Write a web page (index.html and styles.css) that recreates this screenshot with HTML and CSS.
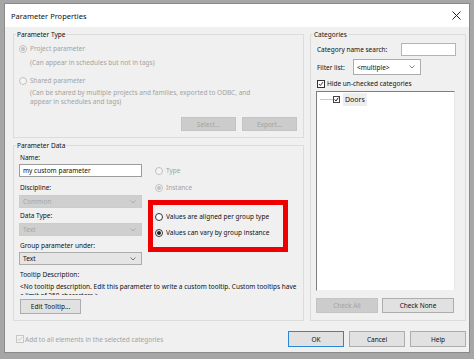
FILE: index.html
```html
<!DOCTYPE html>
<html>
<head>
<meta charset="utf-8">
<link rel="stylesheet" href="styles.css">
</head>
<body>
<div class="window">
  <div class="titlebar">
    <span class="title">Parameter Properties</span>
    <svg class="close" width="9" height="9" viewBox="0 0 9 9"><path d="M0.5 0.5 L8.5 8.5 M8.5 0.5 L0.5 8.5" stroke="#222" stroke-width="1" fill="none"/></svg>
  </div>
  <div class="content">
    <div class="main">
      <div class="leftcol">
        <fieldset class="group g-type">
          <legend>Parameter Type</legend>
          <div class="radio-row dis"><span class="radio dis checked"></span>Project parameter</div>
          <div class="hint">(Can appear in schedules but not in tags)</div>
          <div class="radio-row dis shared"><span class="radio dis"></span>Shared parameter</div>
          <div class="hint hint2">(Can be shared by multiple projects and families, exported to ODBC, and<br>appear in schedules and tags)</div>
          <div class="btnrow">
            <div class="btn btn-dis w55">Select...</div>
            <div class="btn btn-dis w55">Export...</div>
          </div>
        </fieldset>
        <fieldset class="group g-data">
          <legend>Parameter Data</legend>
          <div class="data-grid">
            <div class="fields">
              <div class="lbl">Name:</div>
              <div class="input name-input">my custom parameter</div>
              <div class="lbl l-disc">Discipline:</div>
              <div class="select sel-dis s-disc"><span>Common</span><svg width="6" height="4" viewBox="0 0 6 4"><polyline points="0.5,0.5 3,3 5.5,0.5" fill="none" stroke="#a8a8a8" stroke-width="0.9"/></svg></div>
              <div class="lbl l-dt">Data Type:</div>
              <div class="select sel-dis s-dt"><span>Text</span><svg width="6" height="4" viewBox="0 0 6 4"><polyline points="0.5,0.5 3,3 5.5,0.5" fill="none" stroke="#a8a8a8" stroke-width="0.9"/></svg></div>
              <div class="lbl l-grp">Group parameter under:</div>
              <div class="select sel-en s-grp"><span>Text</span><svg width="6" height="4" viewBox="0 0 6 4"><polyline points="0.5,0.5 3,3 5.5,0.5" fill="none" stroke="#666" stroke-width="0.9"/></svg></div>
            </div>
            <div class="scope">
              <div class="radio-row dis r-type"><span class="radio dis"></span>Type</div>
              <div class="radio-row dis r-inst"><span class="radio dis checked"></span>Instance</div>
              <div class="redbox">
                <div class="radio-row"><span class="radio"></span>Values are aligned per group type</div>
                <div class="radio-row r-vary"><span class="radio checked"></span>Values can vary by group instance</div>
              </div>
            </div>
          </div>
          <div class="lbl l-tip">Tooltip Description:</div>
          <div class="tiptext">&lt;No tooltip description. Edit this parameter to write a custom tooltip. Custom tooltips have a limit of 250 characters.&gt;</div>
          <div class="btn btn-en edit-tip">Edit Tooltip...</div>
        </fieldset>
      </div>
      <fieldset class="group g-cat">
        <legend>Categories</legend>
        <div class="cat-row r1">
          <span class="cat-lbl w-search">Category name search:</span>
          <div class="input search-input"></div>
        </div>
        <div class="cat-row r2">
          <span class="cat-lbl w-filter">Filter list:</span>
          <div class="select sel-white s-filter"><span>&lt;multiple&gt;</span><svg width="6" height="4" viewBox="0 0 6 4"><polyline points="0.5,0.5 3,3 5.5,0.5" fill="none" stroke="#777" stroke-width="0.9"/></svg></div>
        </div>
        <div class="cat-row r3">
          <span class="check"><svg width="8" height="8" viewBox="0 0 8 8"><polyline points="1.3,4 3.1,6 6.7,1.4" fill="none" stroke="#111" stroke-width="1.1"/></svg></span>
          <span>Hide un-checked categories</span>
        </div>
        <div class="tree">
          <div class="tree-row">
            <span class="tree-line"></span>
            <span class="check small"><svg width="7" height="7" viewBox="0 0 7 7"><polyline points="1,3.5 2.8,5.5 6,1" fill="none" stroke="#000" stroke-width="1.3"/></svg></span>
            <span class="tree-item">Doors</span>
          </div>
        </div>
        <div class="cat-btns">
          <div class="btn btn-dis w62">Check All</div>
          <div class="btn btn-en w72">Check None</div>
        </div>
      </fieldset>
    </div>
    <div class="footer">
      <div class="addall">
        <span class="check dis"><svg width="8" height="8" viewBox="0 0 8 8"><polyline points="1.3,4 3.1,6 6.7,1.4" fill="none" stroke="#c4c4c4" stroke-width="1.1"/></svg></span>
        <span>Add to all elements in the selected categories</span>
      </div>
      <div class="dlg-btns">
        <div class="btn btn-en btn-ok w56">OK</div>
        <div class="btn btn-en w56">Cancel</div>
        <div class="btn btn-en w56">Help</div>
      </div>
    </div>
  </div>
</div>
</body>
</html>
```

FILE: styles.css
```css
* { box-sizing: border-box; }
html, body { margin: 0; padding: 0; }
body {
  width: 474px;
  height: 359px;
  overflow: hidden;
  background: #a6a6a6;
  font-family: "Noto Sans", "DejaVu Sans", sans-serif;
  font-size: 6.5px;
  color: #1a1a1a;
}
.window {
  margin: 3px 0 0 4px;
  width: 466px;
  height: 350px;
  border: 1px solid #8a8a8a;
  background: #f0f0f0;
  display: flex;
  flex-direction: column;
}
.titlebar {
  flex: none;
  height: 23px;
  background: #fff;
  display: flex;
  align-items: center;
  justify-content: space-between;
  padding: 0 8px 0 6px;
}
.title { font-size: 7.5px; color: #111; }
.content {
  flex: 1;
  padding: 3px 3px 0 8px;
  display: flex;
  flex-direction: column;
}
.main { display: flex; gap: 6px; }
.leftcol { width: 291px; display: flex; flex-direction: column; gap: 3px; }

fieldset.group {
  margin: 0;
  min-width: 0;
  border: 1px solid #dcdcdc;
}
fieldset.group legend {
  padding: 0 1px;
  margin-left: -3px;
  line-height: 9px;
  color: #111;
}
.g-type { height: 108px; padding: 5px 6px 0 5px; }
.g-data { height: 180px; padding: 3px 6px 0 5px; }
.g-cat { width: 156px; height: 291px; padding: 4px 8px 0 5px; }
.g-cat legend { margin-left: -2px; }

.radio-row { display: flex; align-items: center; height: 10px; line-height: 10px; white-space: nowrap; }
.radio-row.dis { color: #a3a3a3; }
.radio {
  flex: none;
  width: 8px; height: 8px;
  border-radius: 50%;
  border: 1px solid #333;
  background: #fff;
  margin-right: 3px;
  display: flex; align-items: center; justify-content: center;
}
.radio.checked::after {
  content: "";
  width: 4px; height: 4px;
  border-radius: 50%;
  background: #222;
}
.radio.dis { border-color: #c2c2c2; background: #f4f4f4; }
.radio.dis.checked::after { background: #c2c2c2; }

.hint { padding-left: 11px; margin-top: 4px; line-height: 10px; color: #a3a3a3; white-space: nowrap; }
.shared { margin-top: 8px; }
.hint2 { margin-top: 2px; line-height: 9px; }
.btnrow { margin-top: 11px; display: flex; justify-content: flex-end; gap: 6px; }

.btn {
  height: 14px;
  display: flex; align-items: center; justify-content: center;
  border: 1px solid #adadad;
  white-space: nowrap;
}
.btn-dis { background: #cccccc; border-color: #c4c4c4; color: #a3a3a3; }
.btn-en { background: #e1e1e1; color: #111; }
.btn-ok { border-color: #2a86d8; }
.w55 { width: 55px; }
.w56 { width: 56px; height: 16px; }
.w62 { width: 62px; height: 15px; }
.w72 { width: 72px; height: 15px; }

.data-grid { display: grid; grid-template-columns: 123px 140px; column-gap: 6px; }
.fields { display: flex; flex-direction: column; }
.lbl { height: 10px; line-height: 10px; padding-left: 1px; color: #111; white-space: nowrap; }
.input {
  height: 13px;
  background: #fff;
  border: 1px solid #9c9c9c;
  line-height: 11px;
  padding-left: 3px;
  color: #111;
}
.name-input { margin-top: 1px; }
.l-disc { margin-top: 6px; }
.s-disc { margin-top: 2px; }
.l-dt { margin-top: 3px; }
.s-dt { margin-top: 2px; }
.l-grp { margin-top: 5px; }
.s-grp { margin-top: 1px; }
.select {
  height: 13px;
  display: flex; align-items: center; justify-content: space-between;
  padding: 0 5px 0 3px;
  border: 1px solid #acacac;
}
.sel-dis { background: #cfcfcf; border-color: #cccccc; color: #a6a6a6; }
.sel-en { background: #e5e5e5; color: #111; }
.sel-white { background: #fff; color: #111; }

.scope { display: flex; flex-direction: column; }
.r-type { margin-top: 13px; padding-left: 7px; }
.r-inst { margin-top: 7px; padding-left: 7px; }
.redbox {
  margin-top: 7px;
  height: 52px;
  border: 5px solid #ee0000;
  padding: 7px 0 0 2px;
  color: #111;
}
.r-vary { margin-top: 6px; }

.l-tip { margin-top: 5px; }
.tiptext {
  margin-top: 2px;
  height: 13px;
  line-height: 9px;
  overflow: hidden;
  padding-left: 1px;
  padding-right: 0;
  color: #111;
}
.edit-tip { margin-top: 4px; margin-left: 1px; width: 61px; height: 15px; }

.cat-row { display: flex; align-items: center; white-space: nowrap; color: #111; }
.r1 { height: 13px; }
.r2 { margin-top: 3px; height: 16px; }
.r3 { margin-top: 4px; height: 9px; }
.cat-lbl { padding-left: 1px; }
.w-search { width: 85px; }
.w-filter { width: 37px; }
.search-input { width: 55px; border-color: #b4b4b4; }
.s-filter { width: 68px; height: 16px; }
.check {
  flex: none;
  width: 8px; height: 8px;
  border: 1px solid #333;
  background: #fff;
  display: flex; align-items: center; justify-content: center;
  margin-left: 1px; margin-right: 2px;
}
.check svg { display: block; }
.check.small { width: 7px; height: 7px; margin: 0 3px 0 0; border-color: #444; }
.check.dis { border-color: #c8c8c8; background: #f2f2f2; margin-left: 3px; margin-right: 1px; }

.tree {
  margin-top: 3px;
  width: 139px;
  height: 200px;
  background: #fff;
  border-top: 1px solid #7e7e7e;
  border-left: 1px solid #7e7e7e;
  border-right: 1px solid #e6e6e6;
  border-bottom: 1px solid #f0f0f0;
  padding-top: 1px;
}
.tree-row { display: flex; align-items: center; height: 13px; }
.tree-line { width: 13px; margin-left: 3px; border-top: 1px solid #c8c8c8; }
.tree-item {
  background: #ededed;
  height: 13px;
  line-height: 13px;
  padding: 0 2px;
  color: #111;
  font-size: 7px;
}
.cat-btns { margin-top: 7px; display: flex; gap: 4px; }

.footer {
  margin-top: 10px;
  height: 16px;
  display: flex;
  align-items: center;
  justify-content: space-between;
}
.addall { display: flex; align-items: center; color: #a3a3a3; white-space: nowrap; }
.dlg-btns { display: flex; gap: 5px; }
```
